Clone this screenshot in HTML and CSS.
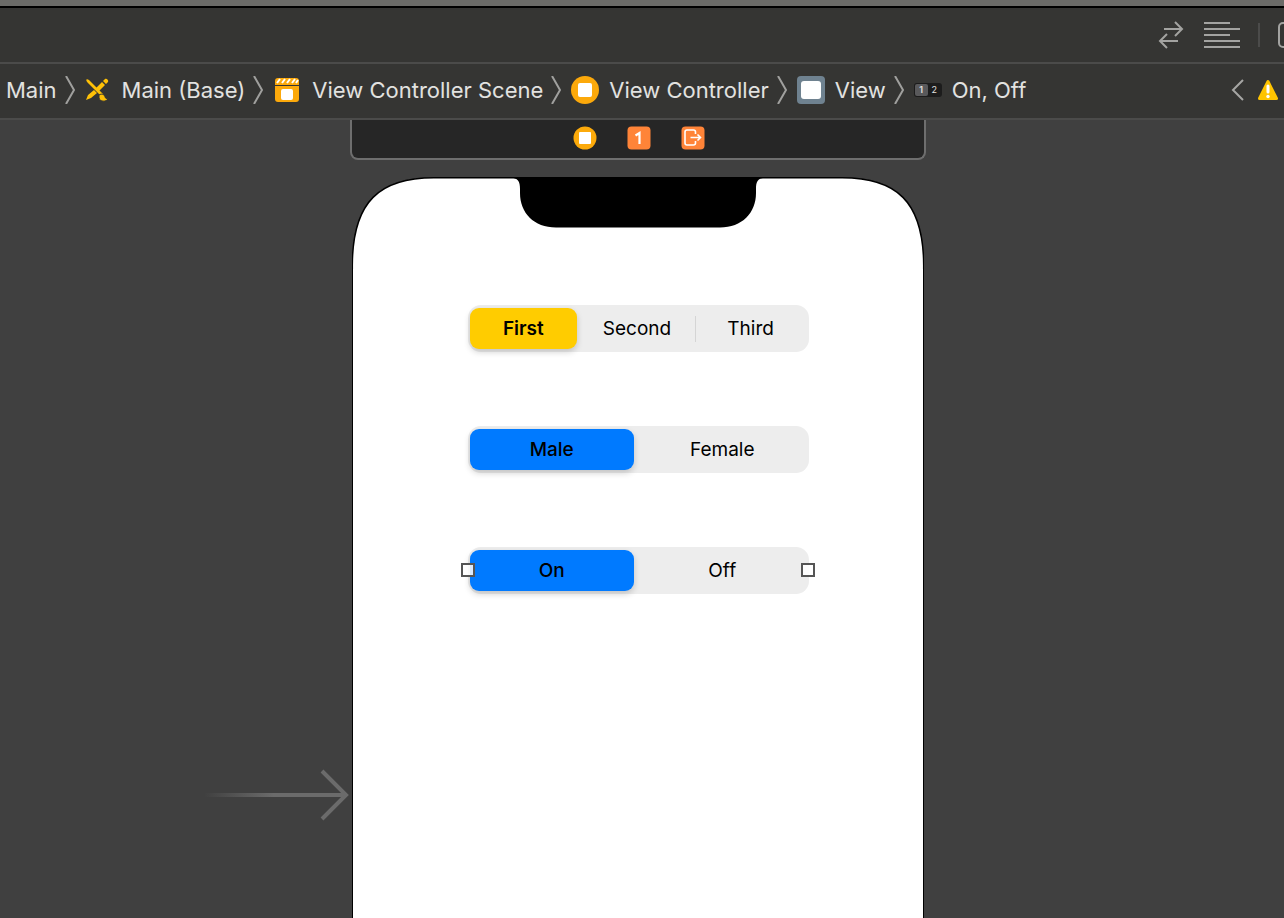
FILE: index.html
```html
<!DOCTYPE html>
<html lang="en">
<head>
<meta charset="utf-8">
<title>Main.storyboard</title>
<link rel="stylesheet" href="styles.css">
</head>
<body>
<div class="window-edge"></div>
<header class="toolbar">
  <button class="tool" type="button" aria-label="Swap editors">
    <svg width="26" height="28" viewBox="0 0 26 28" fill="none" stroke="currentColor" stroke-width="2"><path d="M6 8h18M17 1l7 7-7 7M20 20H2M9 13l-7 7 7 7"/></svg>
  </button>
  <button class="tool" type="button" aria-label="Editor options">
    <svg width="36" height="28" viewBox="0 0 36 28" fill="none" stroke="currentColor" stroke-width="2"><path d="M0 2h26M0 8h36M0 14h26M0 20h36M0 26h36"/></svg>
  </button>
  <span class="tool-divider"></span>
  <button class="tool tool-last" type="button" aria-label="Add editor">
    <svg width="36" height="26" viewBox="0 0 36 26" fill="none" stroke="currentColor" stroke-width="2"><rect x="1" y="1" width="34" height="24" rx="4"/></svg>
  </button>
</header>
<nav class="jumpbar" aria-label="Jump bar">
  <a class="crumb" href="#main">Main</a>
  <svg class="chevron" width="10" height="28" viewBox="0 0 10 28"><path d="M1 0l8 14-8 14"/></svg>
  <a class="crumb" href="#base">
    <svg width="27" height="24" viewBox="0 0 27 24"><g fill="#ffc107"><path d="M1.500 1.500c1-1 3 1 4 2l13 13-2 2L5 7C3 5 .5 2.500 1.500 1.500z"/><path d="M19 2l1-1c1-1 4 1 3 3l-2 2-3-3zM17 4l3 3-7 7-3-3zM9 12l3 3-6 5-5 2 2-5z"/><path d="M14 17c3-2 6 0 6 2 0 1 2 2 3 2-2 3-8 3-9-1z" stroke="#353533" stroke-width="1"/></g></svg>
    Main (Base)</a>
  <svg class="chevron" width="10" height="28" viewBox="0 0 10 28"><path d="M1 0l8 14-8 14"/></svg>
  <a class="crumb" href="#scene">
    <svg width="29" height="26" viewBox="-1 0 29 26"><path fill="#fca90b" d="M4 1h18a3 3 0 0 1 3 3v4H1V4a3 3 0 0 1 3-3zM1 9h24v13a3 3 0 0 1-3 3H4a3 3 0 0 1-3-3z"/><path stroke="#fff" stroke-width="2" d="M3 6l3-4M8 6l3-4M13 6l3-4M18 6l3-4M22 6l2-3"/><rect x="7" y="12" width="12" height="11" rx="2" fill="#fff"/></svg>
    View Controller Scene</a>
  <svg class="chevron" width="10" height="28" viewBox="0 0 10 28"><path d="M1 0l8 14-8 14"/></svg>
  <a class="crumb" href="#controller">
    <svg width="28" height="28" viewBox="0 0 28 28"><circle cx="14" cy="14" r="14" fill="#fca90b"/><rect x="7" y="7" width="14" height="14" rx="2" fill="#fff"/></svg>
    View Controller</a>
  <svg class="chevron" width="10" height="28" viewBox="0 0 10 28"><path d="M1 0l8 14-8 14"/></svg>
  <a class="crumb" href="#view">
    <svg width="28" height="28" viewBox="0 0 28 28"><rect width="28" height="28" rx="4" fill="#6f8290"/><rect x="4" y="5" width="20" height="18" rx="3" fill="#fff"/></svg>
    View</a>
  <svg class="chevron" width="10" height="28" viewBox="0 0 10 28"><path d="M1 0l8 14-8 14"/></svg>
  <a class="crumb" href="#onoff">
    <span class="mini-segments"><span class="mini-on">1</span><span>2</span></span>
    On, Off</a>
  <div class="issues">
    <button type="button" aria-label="Previous issue"><svg width="14" height="24" viewBox="0 0 14 24" fill="none" stroke="#a6a6a4" stroke-width="2"><path d="M12 2L2 12l10 10"/></svg></button>
    <button type="button" aria-label="Warnings"><svg width="22" height="22" viewBox="0 0 22 22"><path d="M11 2.500L19.500 19.500h-17z" fill="#ffc400" stroke="#ffc400" stroke-width="3" stroke-linejoin="round"/><path d="M11 7v6" stroke="#fff" stroke-width="3" stroke-linecap="round"/><circle cx="11" cy="17.500" r="1.700" fill="#fff"/></svg></button>
  </div>
</nav>
<main class="canvas">
  <div class="scene-dock">
    <svg width="24" height="24" viewBox="0 0 24 24"><circle cx="12" cy="12" r="11.500" fill="#fcaa0b"/><rect x="6" y="6" width="12" height="12" rx="1" fill="#fff"/></svg>
    <svg width="24" height="24" viewBox="0 0 24 24"><rect x="0.500" y="0.500" width="23" height="23" rx="4" fill="#ff8438"/><path d="M8.500 9.500L12.500 7v11" fill="none" stroke="#fff" stroke-width="2.200"/></svg>
    <svg width="24" height="24" viewBox="0 0 24 24"><rect x="0.500" y="0.500" width="23" height="23" rx="4" fill="#ff8438"/><path d="M14.500 8V6a2 2 0 0 0-2-2H6a2 2 0 0 0-2 2v11a2 2 0 0 0 2 2h6.500a2 2 0 0 0 2-2v-2M9.500 11.500h10M16.500 8.500l3 3-3 3" fill="none" stroke="#fff" stroke-width="1.600"/></svg>
  </div>
  <div class="stage">
    <svg class="entry-arrow" width="146" height="52" viewBox="0 0 146 52" fill="none" stroke-width="4"><defs><linearGradient id="fade" gradientUnits="userSpaceOnUse" x1="0" y1="0" x2="70" y2="0"><stop offset="0" stop-color="#6b6b6b" stop-opacity="0"/><stop offset="1" stop-color="#6b6b6b"/></linearGradient></defs><path d="M0 26h142" stroke="url(#fade)"/><path d="M118 2l24 24-24 24" stroke="#6b6b6b"/></svg>
    <div class="phone">
      <svg class="phone-cap" viewBox="0 0 572 92" preserveAspectRatio="none"><path d="M.3 93V88C.7 24 28 .8 82 .8H490C544 .8 571.300 24 571.700 88V93" fill="#fff" stroke="#000" stroke-width="1.500"/><path d="M158 0.500C166 1 168 4 168 12V16C168 36 182 50.500 204 50.500H368C390 50.500 404 36 404 16V12C404 4 406 1 414 .5z" fill="#000"/></svg>
      <div class="screen">
        <fieldset class="segmented">
          <label class="segment"><input type="radio" name="order" checked><span>First</span></label>
          <label class="segment"><input type="radio" name="order"><span>Second</span></label>
          <label class="segment divided"><input type="radio" name="order"><span>Third</span></label>
        </fieldset>
        <fieldset class="segmented blue">
          <label class="segment"><input type="radio" name="gender" checked><span>Male</span></label>
          <label class="segment"><input type="radio" name="gender"><span>Female</span></label>
        </fieldset>
        <fieldset class="segmented blue selected">
          <label class="segment"><input type="radio" name="power" checked><span>On</span></label>
          <label class="segment"><input type="radio" name="power"><span>Off</span></label>
        </fieldset>
      </div>
    </div>
  </div>
</main>
</body>
</html>
```
FILE: styles.css
```css
*, *::before, *::after { box-sizing: border-box; }
body {
  margin: 0;
  min-height: 100vh;
  display: flex;
  flex-direction: column;
  background: #404040;
  color: #e2e2e0;
  font-family: Inter, "Liberation Sans", sans-serif;
  font-size: 22px;
  overflow: hidden;
}
button { padding: 0; border: 0; background: none; color: inherit; }
svg { display: block; flex: none; }
.window-edge { height: 8px; background: #6b6b68; border-bottom: 2px solid #000; }
.toolbar {
  height: 56px;
  display: flex;
  align-items: center;
  justify-content: flex-end;
  gap: 20px;
  background: #353533;
  border-bottom: 2px solid #4b4b4a;
  color: #a3a3a1;
  overflow: hidden;
}
.tool-divider { width: 2px; height: 24px; background: #4b4b4a; margin-left: -2px; }
.tool-last { width: 6px; overflow: hidden; margin-left: -2px; }
.jumpbar {
  height: 56px;
  display: flex;
  align-items: center;
  padding: 0 5px 2px 6px;
  background: #353533;
  border-bottom: 2px solid #4b4b4a;
}
.crumb {
  display: flex;
  align-items: center;
  gap: 10px;
  color: inherit;
  text-decoration: none;
  white-space: nowrap;
  line-height: 28px;
}
.chevron { margin: 0 10px 0 8px; fill: none; stroke: #a0a09e; stroke-width: 2; }
.mini-segments {
  width: 28px;
  height: 14px;
  display: grid;
  grid-template-columns: 1fr 1fr;
  padding: 1px;
  border-radius: 3px;
  background: #1c1c1c;
  font-size: 9px;
  line-height: 12px;
  text-align: center;
}
.mini-on { background: #59595b; border-radius: 2px; font-weight: 600; }
.issues { display: flex; align-items: center; gap: 12px; margin-left: auto; }
.canvas { flex: 1; display: flex; flex-direction: column; align-items: center; padding-right: 8px; }
.scene-dock {
  width: 576px;
  height: 40px;
  display: flex;
  justify-content: center;
  gap: 30px;
  padding: 6px 0 0 2px;
  background: #262626;
  border: 2px solid #6e6e6e;
  border-top: 0;
  border-radius: 0 0 8px 8px;
}
.stage { position: relative; flex: 1; display: flex; margin-top: 17px; }
.entry-arrow { position: absolute; right: 100%; top: 592px; margin-right: 2px; }
.phone { width: 572px; display: flex; flex-direction: column; }
.phone-cap { width: 100%; height: 92px; }
.screen {
  flex: 1;
  display: flex;
  flex-direction: column;
  align-items: center;
  gap: 74px;
  padding-top: 36px;
  background: #fff;
  border: solid #000;
  border-width: 0 1px;
}
.segmented {
  position: relative;
  width: 341px;
  height: 47px;
  display: grid;
  grid-template-rows: 41px;
  grid-auto-flow: column;
  grid-auto-columns: 1fr;
  margin: 0;
  padding: 3px 0;
  border: 0;
  border-radius: 13px;
  background: #ededed;
  color: #000;
  font-size: 19px;
}
.segment { position: relative; display: flex; padding: 0 4px 0 2px; }
.segment input { position: absolute; opacity: 0; margin: 0; }
.segment span {
  flex: 1;
  display: flex;
  align-items: center;
  justify-content: center;
  border-radius: 9px;
}
.segment input:checked + span {
  background: #ffcc00;
  font-weight: 600;
  box-shadow: 0 3px 6px rgba(0, 0, 0, .18);
}
.blue input:checked + span { background: #007aff; font-weight: 500; }
.divided { background: linear-gradient(#d5d5d5, #d5d5d5) left center / 1px 26px no-repeat; }
.selected::before, .selected::after {
  content: "";
  position: absolute;
  z-index: 1;
  top: 16px;
  width: 14px;
  height: 14px;
  border: 2px solid #555;
  background: rgba(255, 255, 255, .85);
}
.selected::before { left: -7px; }
.selected::after { right: -6px; }
```
